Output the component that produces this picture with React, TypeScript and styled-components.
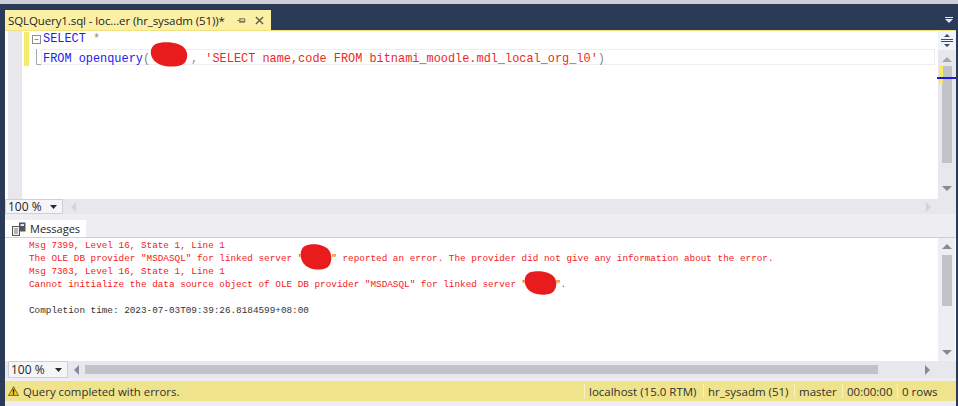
import type { FC } from "react";
import styled, { createGlobalStyle } from "styled-components";

const GlobalStyle = createGlobalStyle`
  html, body {
    margin: 0;
    padding: 0;
    background: #2a3a57;
  }
`;

const Window = styled.div`
  width: 958px;
  height: 406px;
  display: flex;
  flex-direction: column;
  overflow: hidden;
  background: #2a3a57;
  border-top: 4px solid #ccced8;
  box-sizing: border-box;
  font-family: "Open Sans", "Liberation Sans", sans-serif;
`;

const TabStrip = styled.div`
  height: 26px;
  flex: none;
  display: flex;
  align-items: flex-end;
  justify-content: space-between;
  padding: 0 5px 0 5px;
`;

const DocTab = styled.div`
  width: 266px;
  height: 20px;
  display: flex;
  align-items: center;
  gap: 8px;
  padding-left: 3px;
  box-sizing: border-box;
  background: #fcf0a6;
  color: #1e1e1e;
  font-size: 11.5px;
  white-space: nowrap;
`;

const TabTitle = styled.span`
  width: 221px;
  letter-spacing: -0.1px;
`;

const TabTools = styled.div`
  display: flex;
  align-items: center;
  gap: 9px;
`;

const StripCaret = styled.svg`
  margin-bottom: 7px;
`;

const Body = styled.div`
  flex: 1;
  min-height: 0;
  margin: 0 2px 0 5px;
  display: flex;
  flex-direction: column;
  background: #eeeef2;
`;

const Editor = styled.div`
  height: 168px;
  flex: none;
  display: flex;
  border-top: 1px solid #f2e27c;
  background: #fff;
`;

const Gutter = styled.div`
  width: 14px;
  margin-left: 3px;
  flex: none;
  background: #e8e8ec;
`;

const ChangeMark = styled.div`
  width: 5px;
  height: 34px;
  margin: 1px 3px 0 2px;
  flex: none;
  background: #f7e96b;
`;

const CodePane = styled.div`
  flex: 1;
  min-width: 0;
  padding-top: 1px;
`;

const CodeRow = styled.div`
  height: 16px;
  margin: 0 3px 1px 0;
  display: flex;
`;

const FoldCell = styled.span`
  width: 9px;
  height: 16px;
  flex: none;
  display: flex;
  align-items: center;
`;

const CodeText = styled.div<{ $current?: boolean }>`
  flex: 1;
  padding-left: 1px;
  box-sizing: border-box;
  border: 1px solid ${(p) => (p.$current ? "#eeeef2" : "transparent")};
  font: 11.9px/13px "Liberation Mono", monospace;
  white-space: pre;
`;

const Kw = styled.span`
  color: #2222e8;
`;

const Str = styled.span`
  color: #f0281e;
`;

const Muted = styled.span`
  color: #8a8a8a;
`;

const Redact = styled.span<{ $w: number; $h: number; $sw: number; $x: number; $dy: number }>`
  position: relative;
  display: inline-block;
  width: ${(p) => p.$w}px;
  height: 1em;

  svg {
    position: absolute;
    left: ${(p) => p.$x}px;
    top: 50%;
    width: ${(p) => p.$sw}px;
    height: ${(p) => p.$h}px;
    margin-top: ${(p) => p.$dy - p.$h / 2}px;
  }
`;

const VScroll = styled.div`
  width: 18px;
  flex: none;
  display: flex;
  flex-direction: column;
  align-items: center;
  background: #e8e8ec;
`;

const SplitButton = styled.div`
  width: 18px;
  height: 19px;
  display: flex;
  align-items: center;
  justify-content: center;
  background: #f0f3fb;
  margin-bottom: 3px;
`;

const ArrowCell = styled.div<{ $h?: number }>`
  width: 100%;
  height: ${(p) => p.$h ?? 13}px;
  flex: none;
  display: flex;
  align-items: center;
  justify-content: center;
`;

const Track = styled.div`
  flex: 1;
  width: 100%;
  position: relative;
`;

const Thumb = styled.div<{ $h: number }>`
  width: 10px;
  height: ${(p) => p.$h}px;
  margin: 0 auto;
  background: #c2c3c9;
`;

const OverviewMark = styled.div`
  position: absolute;
  left: 1px;
  top: 0;
  width: 4px;
  height: 18px;
  background: #f7e96b;
`;

const OverviewLine = styled.div`
  position: absolute;
  left: -1px;
  right: 0;
  top: 11px;
  height: 2px;
  background: #1a1ae0;
`;

const Triangle = styled.span<{ $dir: "up" | "down" | "left" | "right"; $color?: string }>`
  width: 0;
  height: 0;
  display: block;
  border-style: solid;
  border-color: transparent;
  ${(p) => {
    const c = p.$color ?? "#868999";
    if (p.$dir === "up") return `border-width: 0 5px 5px; border-bottom-color: ${c};`;
    if (p.$dir === "down") return `border-width: 5px 5px 0; border-top-color: ${c};`;
    if (p.$dir === "left") return `border-width: 5px 5px 5px 0; border-right-color: ${c};`;
    return `border-width: 5px 0 5px 5px; border-left-color: ${c};`;
  }}
`;

const ZoomRow = styled.div<{ $h: number }>`
  height: ${(p) => p.$h}px;
  flex: none;
  display: flex;
  align-items: center;
  background: #e8e8ec;
`;

const ZoomCombo = styled.div<{ $w: number; $ml: number }>`
  width: ${(p) => p.$w}px;
  height: 100%;
  margin-left: ${(p) => p.$ml}px;
  flex: none;
  display: flex;
  align-items: center;
  justify-content: space-between;
  padding: 0 5px 0 2px;
  box-sizing: border-box;
  background: #f5f5f8;
  border: 1px solid #ccd0de;
  font-size: 12px;
  color: #1e1e1e;
`;

const HArrow = styled.div<{ $w: number; $ml?: number; $mr?: number }>`
  width: ${(p) => p.$w}px;
  margin-left: ${(p) => p.$ml ?? 0}px;
  margin-right: ${(p) => p.$mr ?? 0}px;
  flex: none;
  display: flex;
  justify-content: center;
`;

const HThumb = styled.div`
  height: 9px;
  flex: 1;
  background: #c2c3c9;
`;

const HSpace = styled.div`
  flex: 1;
`;

const ResultsTabs = styled.div`
  height: 23px;
  flex: none;
  display: flex;
  align-items: flex-end;
  background: #eeeef2;
`;

const ResultTab = styled.div`
  width: 81px;
  height: 17px;
  display: flex;
  align-items: center;
  gap: 4px;
  padding-left: 7px;
  box-sizing: border-box;
  background: #fff;
  font-size: 11px;
  color: #1e1e1e;
`;

const Messages = styled.div`
  height: 123px;
  flex: none;
  display: flex;
  border-top: 1px solid #cccedb;
  background: #fff;
`;

const MessageText = styled.div`
  flex: 1;
  padding: 1px 0 0 24px;
  font: 9.33px/13px "Liberation Mono", monospace;
  white-space: pre;
`;

const Line = styled.div<{ $err?: boolean; $gap?: boolean }>`
  height: 13px;
  color: ${(p) => (p.$err ? "#f42020" : "#333")};
  margin-top: ${(p) => (p.$gap ? 13 : 0)}px;
`;

const MessageScroll = styled(VScroll)`
  background: #eeeef2;
  margin: 0 1px 0 0;
  width: 17px;
`;

const Gap = styled.div`
  height: 3px;
  flex: none;
  background: #eeeef2;
`;

const StatusBar = styled.div`
  height: 20px;
  flex: none;
  display: flex;
  align-items: center;
  background: #efe48b;
  font-size: 11.5px;
  color: #303030;
  white-space: nowrap;
`;

const StatusMessage = styled.div`
  flex: 1;
  display: flex;
  align-items: center;
  gap: 4px;
  padding-left: 3px;
  font-size: 11.4px;
`;

const StatusCell = styled.div<{ $w: number }>`
  width: ${(p) => p.$w}px;
  flex: none;
  height: 14px;
  display: flex;
  align-items: center;
  padding-left: 4px;
  box-sizing: border-box;
  border-left: 1px solid #f9f3c4;
`;

const Scribble: FC = () => (
  <svg viewBox="0 0 40 26" preserveAspectRatio="none">
    <path
      d="M6 2 C14 -1 30 0 36 6 C41 11 40 21 33 24 C24 27 10 26 4 19 C-1 13 0 5 6 2 Z"
      fill="#e81c1c"
    />
  </svg>
);

const PinIcon: FC = () => (
  <svg width="9" height="9" viewBox="0 0 11 11" fill="none" stroke="#6d6a4a" strokeWidth="1.2">
    <path d="M0.5 5.5H3M3.5 2.5V8.5M3.5 3.5H9.5V7.5H3.5M3.5 6.5H9.5" />
  </svg>
);

const CloseIcon: FC = () => (
  <svg width="9" height="9" viewBox="0 0 10 10" fill="none" stroke="#5f5c45" strokeWidth="1.5">
    <path d="M1 1L9 9M9 1L1 9" />
  </svg>
);

const SplitIcon: FC = () => (
  <svg width="12" height="13" viewBox="0 0 12 13" fill="#3f4a63">
    <path d="M6 0L9 3H3Z M0 5H12V6H0Z M0 7H12V8H0Z M3 10H9L6 13Z" />
  </svg>
);

const MessagesIcon: FC = () => (
  <svg width="14" height="14" viewBox="0 0 14 14">
    <rect x="0.5" y="4.5" width="7" height="9" fill="#f4f4f6" stroke="#555" />
    <path d="M2 7H6M2 9H6M2 11H6" stroke="#777" />
    <rect x="7" y="0.5" width="6.5" height="9" fill="#555" />
    <rect x="8.5" y="2" width="3.5" height="2" fill="#dfe3ee" />
  </svg>
);

const WarningIcon: FC = () => (
  <svg width="11" height="10" viewBox="0 0 16 15">
    <path d="M8 1L15.5 14.5H0.5Z" fill="#f7c81e" stroke="#2f2a10" strokeWidth="1" strokeLinejoin="round" />
    <path d="M7 5H9V10H7ZM7 11H9V13H7Z" fill="#1a1a1a" />
  </svg>
);

const FoldBox: FC = () => (
  <svg width="9" height="16" viewBox="0 0 9 16" fill="none" stroke="#8d8d8d">
    <rect x="0.5" y="3.5" width="8" height="8" fill="#fff" />
    <path d="M2.5 7.5H6.5" />
  </svg>
);

const FoldTail: FC = () => (
  <svg width="9" height="16" viewBox="0 0 9 16" fill="none" stroke="#a8a8a8">
    <path d="M4.5 0V15.5H9" />
  </svg>
);

const Hidden: FC<{ w: number; h: number; sw: number; x: number; dy?: number }> = ({ w, h, sw, x, dy = 0 }) => (
  <Redact $w={w} $h={h} $sw={sw} $x={x} $dy={dy}>
    <Scribble />
  </Redact>
);

const ZoomSelect: FC<{ w: number; ml: number }> = ({ w, ml }) => (
  <ZoomCombo $w={w} $ml={ml}>
    100 %
    <svg width="7" height="4" viewBox="0 0 7 4">
      <path d="M0 0H7L3.5 4Z" fill="#2a2a2a" />
    </svg>
  </ZoomCombo>
);

export default function App() {
  return (
    <Window>
      <GlobalStyle />
      <TabStrip>
        <DocTab>
          <TabTitle>SQLQuery1.sql - loc...er (hr_sysadm (51))*</TabTitle>
          <TabTools>
            <PinIcon />
            <CloseIcon />
          </TabTools>
        </DocTab>
        <StripCaret width="8" height="6" viewBox="0 0 8 6">
          <path d="M0 0H8V1H0ZM0 2H8L4 6Z" fill="#e6e8ef" />
        </StripCaret>
      </TabStrip>
      <Body>
        <Editor>
          <Gutter />
          <ChangeMark />
          <CodePane>
            <CodeRow>
              <FoldCell>
                <FoldBox />
              </FoldCell>
              <CodeText>
                <Kw>SELECT</Kw> <Muted>*</Muted>
              </CodeText>
            </CodeRow>
            <CodeRow>
              <FoldCell>
                <FoldTail />
              </FoldCell>
              <CodeText $current>
                <Kw>FROM</Kw> <Kw>openquery</Kw>
                <Muted>(</Muted>
                <Hidden w={41} h={25} sw={38} x={0} dy={-1} />
                <Muted>,</Muted> <Str>'SELECT name,code FROM bitnami_moodle.mdl_local_org_l0'</Str>
                <Muted>)</Muted>
              </CodeText>
            </CodeRow>
          </CodePane>
          <VScroll>
            <SplitButton>
              <SplitIcon />
            </SplitButton>
            <ArrowCell>
              <Triangle $dir="up" $color="#a5a7b3" />
            </ArrowCell>
            <Track>
              <OverviewMark />
              <Thumb $h={97} />
              <OverviewLine />
            </Track>
            <ArrowCell $h={21}>
              <Triangle $dir="down" />
            </ArrowCell>
          </VScroll>
        </Editor>
        <ZoomRow $h={15}>
          <ZoomSelect w={58} ml={0} />
          <HArrow $w={20}>
            <Triangle $dir="left" $color="#d3d4da" />
          </HArrow>
          <HSpace />
          <HArrow $w={20} $mr={18}>
            <Triangle $dir="right" $color="#d3d4da" />
          </HArrow>
        </ZoomRow>
        <ResultsTabs>
          <ResultTab>
            <MessagesIcon />
            Messages
          </ResultTab>
        </ResultsTabs>
        <Messages>
          <MessageText>
            <Line $err>Msg 7399, Level 16, State 1, Line 1</Line>
            <Line $err>
              The OLE DB provider "MSDASQL" for linked server "
              <Hidden w={28} h={26} sw={32} x={-3} />" reported an error. The provider did not give any information about the error.
            </Line>
            <Line $err>Msg 7303, Level 16, State 1, Line 1</Line>
            <Line $err>
              Cannot initialize the data source object of OLE DB provider "MSDASQL" for linked server "
              <Hidden w={28} h={24} sw={33} x={-3} />
              ".
            </Line>
            <Line $gap>Completion time: 2023-07-03T09:39:26.8184599+08:00</Line>
          </MessageText>
          <MessageScroll>
            <ArrowCell $h={17}>
              <Triangle $dir="up" />
            </ArrowCell>
            <Track>
              <Thumb $h={51} />
            </Track>
            <ArrowCell $h={17}>
              <Triangle $dir="down" />
            </ArrowCell>
          </MessageScroll>
        </Messages>
        <ZoomRow $h={17}>
          <ZoomSelect w={60} ml={3} />
          <HArrow $w={17}>
            <Triangle $dir="left" />
          </HArrow>
          <HThumb />
          <HArrow $w={20} $ml={39} $mr={19}>
            <Triangle $dir="right" />
          </HArrow>
        </ZoomRow>
        <Gap />
        <StatusBar>
          <StatusMessage>
            <WarningIcon />
            Query completed with errors.
          </StatusMessage>
          <StatusCell $w={119}>localhost (15.0 RTM)</StatusCell>
          <StatusCell $w={91}>hr_sysadm (51)</StatusCell>
          <StatusCell $w={48}>master</StatusCell>
          <StatusCell $w={55}>00:00:00</StatusCell>
          <StatusCell $w={59}>0 rows</StatusCell>
        </StatusBar>
      </Body>
    </Window>
  );
}
